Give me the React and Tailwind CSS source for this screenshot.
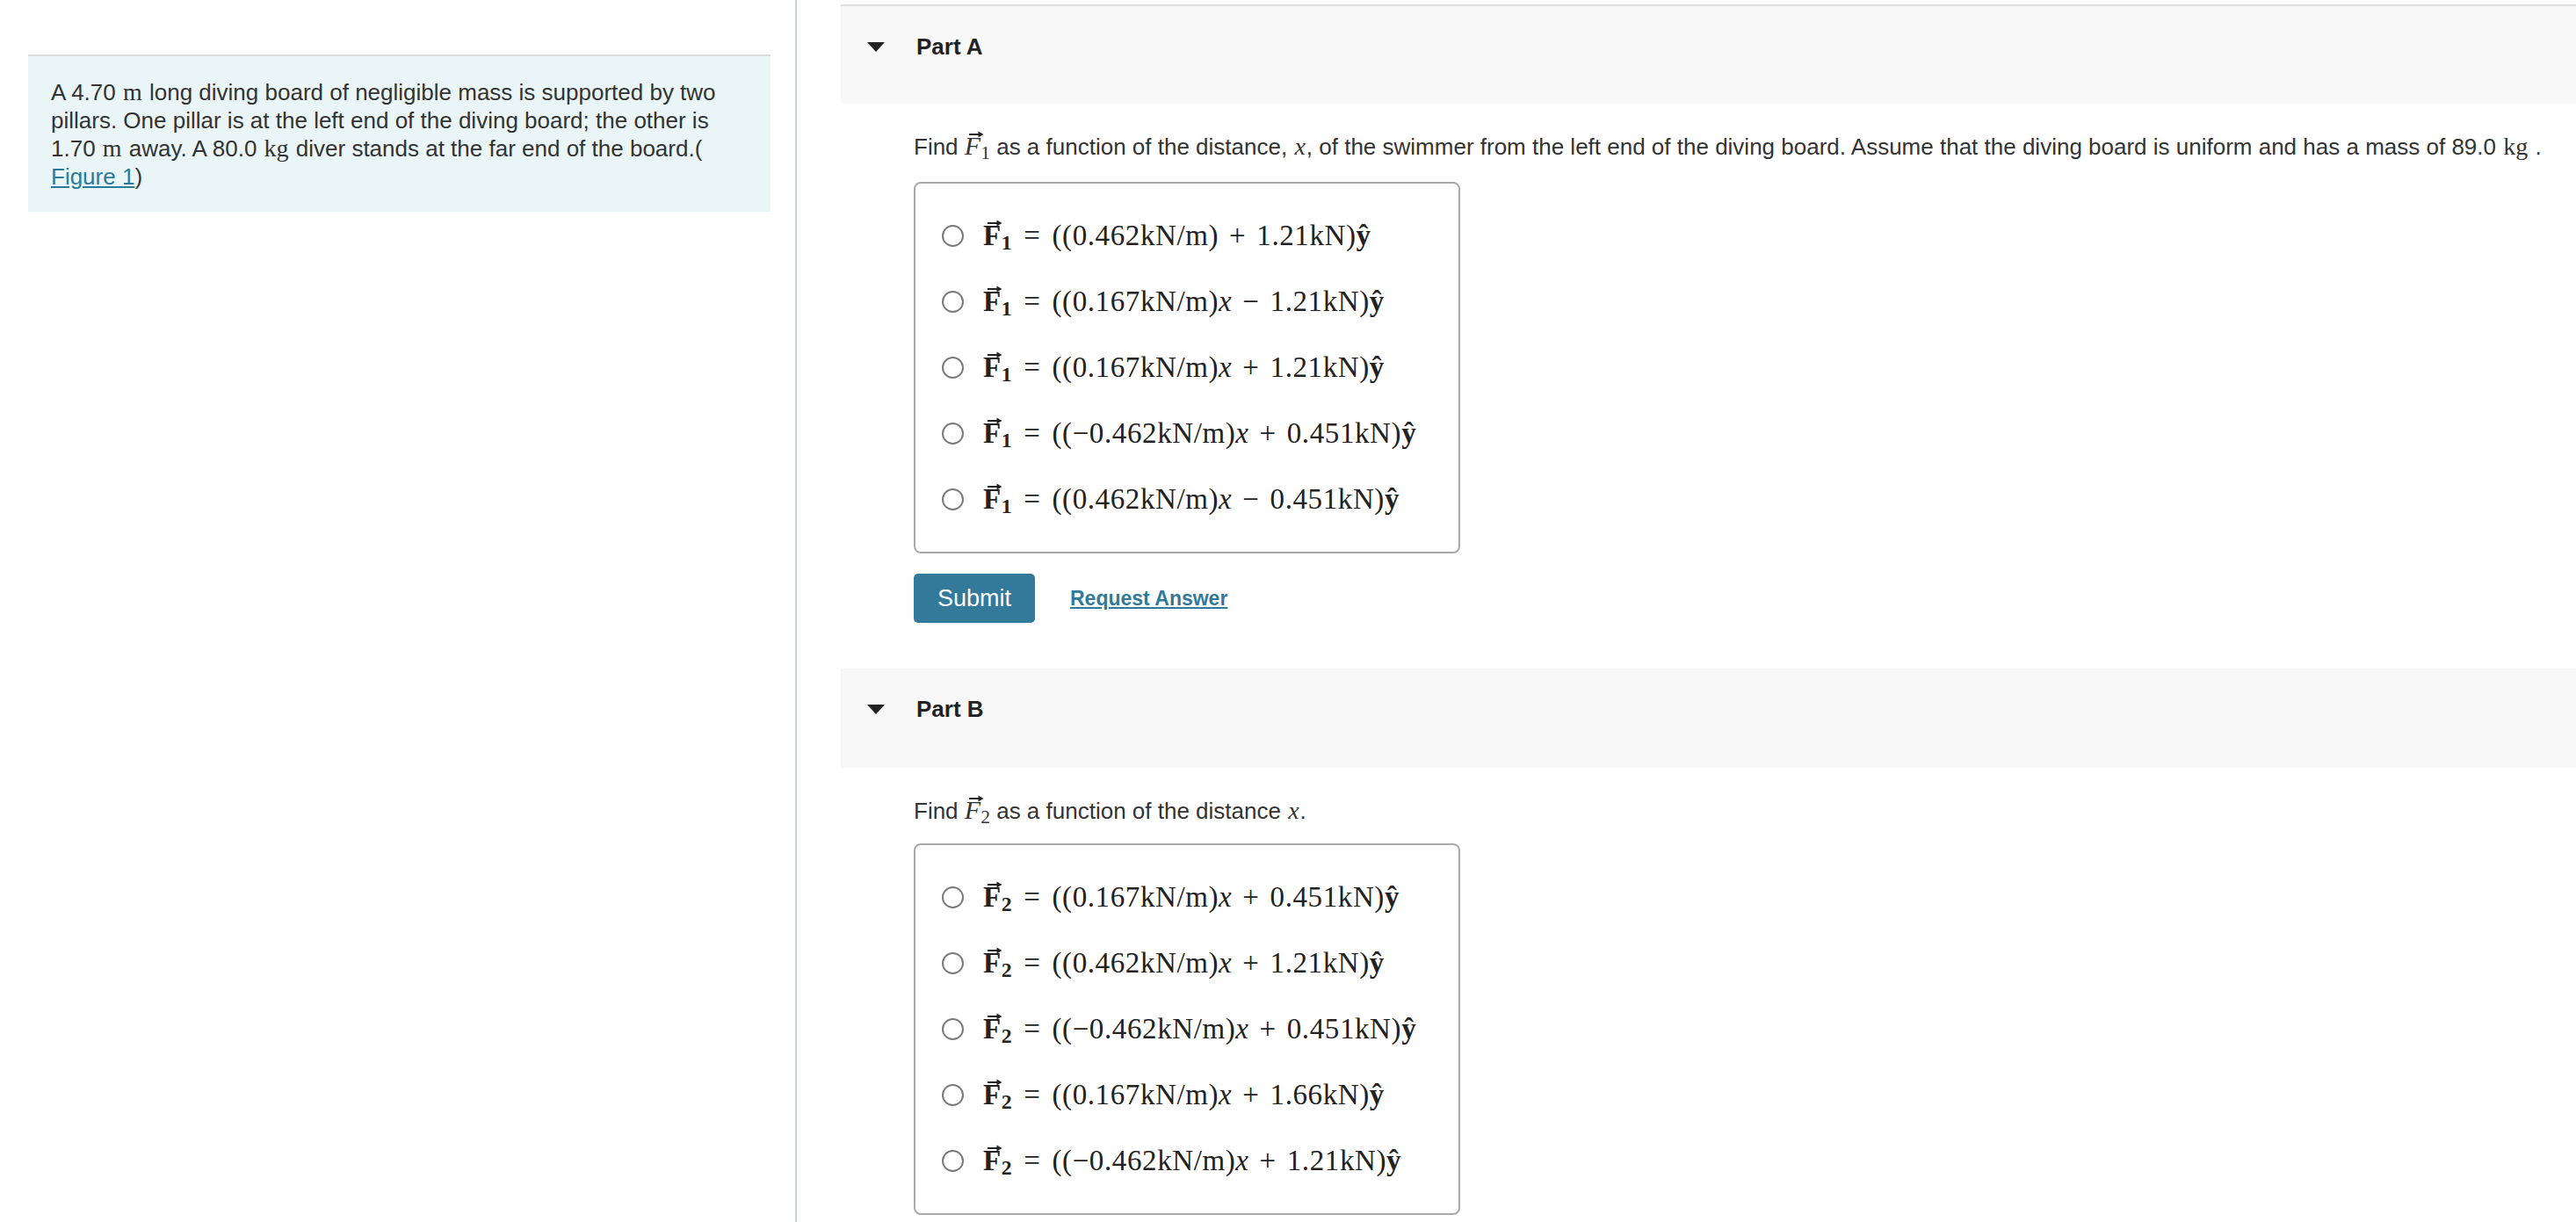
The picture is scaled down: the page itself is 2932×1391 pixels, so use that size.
import React from "react";

const partA = [
    ["0.462", false, "+", "1.21"],
    ["0.167", true, "\u2212", "1.21"],
    ["0.167", true, "+", "1.21"],
    ["\u22120.462", true, "+", "0.451"],
    ["0.462", true, "\u2212", "0.451"],
];

const partB = [
    ["0.167", true, "+", "0.451"],
    ["0.462", true, "+", "1.21"],
    ["\u22120.462", true, "+", "0.451"],
    ["0.167", true, "+", "1.66"],
    ["\u22120.462", true, "+", "1.21"],
];

const Arrow = () => (
    <svg className="absolute left-[5px] top-[-2px]" width="17" height="8" viewBox="0 0 17 8">
        <path d="M0 4H13" stroke="#222" strokeWidth="2" />
        <path d="M10.5 0.5L16.5 4L10.5 7.5Z" fill="#222" />
    </svg>
);

// vector F with an arrow above, bold in the choices and italic in the question text
const Vec = ({ sub, bold }) => (
    <span className="inline-block leading-none">
        <span className={bold ? "relative inline-block font-bold" : "relative inline-block italic"}>
            F
            <Arrow />
        </span>
        <span className={bold ? "relative top-[0.22em] text-[0.72em] font-bold" : "relative top-[0.22em] text-[0.72em]"}>{sub}</span>
    </span>
);

const Serif = ({ children, italic }) => (
    <span className={italic ? "font-['Liberation_Serif',serif] italic text-[28px] leading-none mx-[1px]" : "font-['Liberation_Serif',serif] text-[28px] leading-none mx-[1px]"}>
        {children}
    </span>
);

const Choice = ({ sub, opt }) => {
    const [coef, hasX, op, c] = opt;
    return (
        <label className="flex items-center h-[75px]">
            <span className="w-[25px] h-[25px] rounded-full border-2 border-[#7a7a7a] bg-white shrink-0" />
            <span className="ml-[22px] font-['Liberation_Serif',serif] text-[33px] tracking-[0.6px] leading-none text-[#222] whitespace-nowrap">
                <Vec sub={sub} bold />
                <span className="mx-[13px]">=</span>
                (({coef}kN/m)
                {hasX && <i>x</i>}
                <span className="mx-[12px]">{op}</span>
                {c}kN)
                <b>{"\u0177"}</b>
            </span>
        </label>
    );
};

const Header = ({ title, top }) => (
    <div className={top ? "ml-[50px] h-[113px] bg-[#f8f8f8] border-t-2 border-[#dedede] flex items-start pt-[30px]" : "ml-[50px] h-[113px] bg-[#f8f8f8] flex items-start pt-[30px]"}>
        <div className="flex items-center h-[32px]">
            <svg className="ml-[30px]" width="20" height="11" viewBox="0 0 20 11">
                <path d="M0 0H20L10 11Z" fill="#222" />
            </svg>
            <span className="ml-[36px] text-[26px] font-bold text-[#222]">{title}</span>
        </div>
    </div>
);

const App = () => {
    return (
        <div className="flex min-h-screen bg-white font-['Liberation_Sans',Arial,sans-serif] text-[#333]">
            <div className="w-[905px] shrink-0 pl-[32px] pr-[28px] pt-[62px]">
                <div className="bg-[#eaf5f7] border-t-2 border-[#dcdcdc] pl-[26px] pr-[40px] pt-[25px] pb-[24px] text-[26px] leading-[32px]">
                    A 4.70 <Serif>m</Serif> long diving board of negligible mass is supported by two pillars. One pillar is at
                    the left end of the diving board; the other is 1.70 <Serif>m</Serif> away. A 80.0 <Serif>kg</Serif> diver
                    stands at the far end of the board.({" "}
                    <a href="#" className="text-[#2b7a9c] underline">Figure 1</a>)
                </div>
            </div>

            <div className="flex-1 border-l-2 border-[#c3d1df] pt-[5px] pb-[40px]">
                <Header title="Part A" top />
                <div className="pl-[133px]">
                    <p className="mt-[32px] text-[26px] leading-[32px] whitespace-nowrap">
                        Find{" "}
                        <span className="font-['Liberation_Serif',serif] text-[30px]"><Vec sub="1" /></span>{" "}
                        as a function of the distance, <Serif italic>x</Serif>, of the swimmer from the left end of the diving
                        board. Assume that the diving board is uniform and has a mass of 89.0 <Serif>kg</Serif> .
                    </p>
                    <div className="mt-[24px] w-[622px] border-2 border-[#a9a9a9] rounded-[8px] pl-[30px] py-[22px]">
                        {partA.map((o, i) => (
                            <Choice key={i} sub="1" opt={o} />
                        ))}
                    </div>
                    <div className="mt-[23px] flex items-center">
                        <button className="w-[138px] h-[56px] rounded-[5px] bg-[#337999] text-white text-[27px]">Submit</button>
                        <a href="#" className="ml-[40px] text-[23px] font-bold text-[#2f7a9b] underline">Request Answer</a>
                    </div>
                </div>

                <div className="mt-[52px]">
                    <Header title="Part B" />
                </div>
                <div className="pl-[133px]">
                    <p className="mt-[32px] text-[26px] leading-[32px] whitespace-nowrap">
                        Find{" "}
                        <span className="font-['Liberation_Serif',serif] text-[30px]"><Vec sub="2" /></span>{" "}
                        as a function of the distance <Serif italic>x</Serif>.
                    </p>
                    <div className="mt-[21px] w-[622px] border-2 border-[#a9a9a9] rounded-[8px] pl-[30px] py-[22px]">
                        {partB.map((o, i) => (
                            <Choice key={i} sub="2" opt={o} />
                        ))}
                    </div>
                </div>
            </div>
        </div>
    );
};

export default App;
